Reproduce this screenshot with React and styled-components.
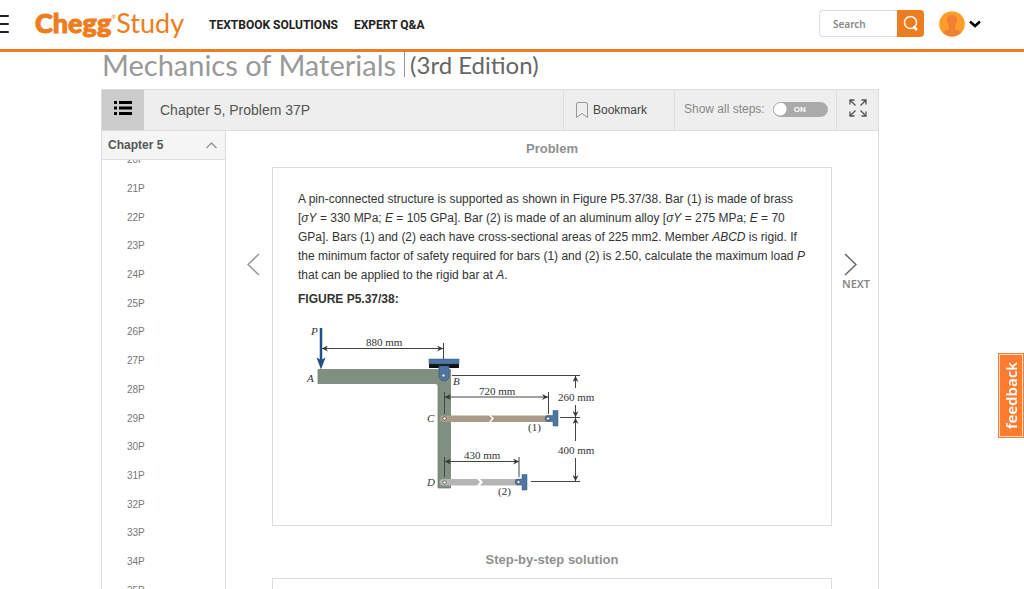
import React from 'react';
import styled, { createGlobalStyle } from 'styled-components';

const GlobalStyle = createGlobalStyle`
  * {
    box-sizing: border-box;
  }

  body {
    margin: 0;
    background: #fff;
    font-family: "Liberation Sans", Arial, sans-serif;
    color: #333;
  }

  button {
    padding: 0;
    border: 0;
    background: none;
    font: inherit;
    color: inherit;
    cursor: pointer;
  }

  ul, h1, h2, p {
    margin: 0;
    padding: 0;
  }
`;

const Page = styled.div`
  display: flex;
  flex-direction: column;
  height: 100vh;
  overflow: hidden;
`;

const Header = styled.header`
  display: flex;
  flex: none;
  align-items: center;
  height: 52px;
  padding: 0 43px 2px 0;
  border-bottom: 3px solid #ec7c20;
  font-family: Lato, sans-serif;
`;

const Burger = styled.button`
  display: flex;
  width: 35px;
`;

const Logo = styled.a`
  display: flex;
  align-items: flex-start;
  width: 174px;
  padding-bottom: 2px;
  color: #ee7d20;
  font-size: 27px;
  line-height: 32px;
  text-decoration: none;
`;

const LogoBold = styled.span`
  font-weight: 900;
  -webkit-text-stroke: 1px #ee7d20;
`;

const LogoMark = styled.span`
  font-size: 6px;
  line-height: 20px;
`;

const Nav = styled.nav`
  display: flex;
  flex: 1;
  gap: 16px;
  padding-top: 3px;
`;

const NavLink = styled.a`
  color: #222;
  font: 700 12px Roboto, sans-serif;
  text-decoration: none;
`;

const Search = styled.form`
  display: flex;
  width: 105px;
  height: 27px;
  margin-right: 15px;
`;

const SearchInput = styled.input`
  flex: 1;
  min-width: 0;
  padding: 0 13px;
  border: 1px solid #ddd;
  border-right: 0;
  border-radius: 4px 0 0 4px;
  font: 600 10px "Noto Sans", sans-serif;

  &::placeholder {
    color: #888;
    opacity: 1;
  }
`;

const SearchButton = styled.button`
  display: flex;
  align-items: center;
  justify-content: center;
  width: 27px;
  border-radius: 0 4px 4px 0;
  background: #ee7d20;
`;

const Account = styled.button`
  display: flex;
  align-items: center;
  gap: 4px;
`;

const Content = styled.main`
  display: flex;
  flex: 1;
  flex-direction: column;
  min-height: 0;
  padding: 0 145px 0 101px;
`;

const Title = styled.h1`
  display: flex;
  flex: none;
  align-items: center;
  height: 37px;
  padding: 0 0 12px 1px;
  color: #999;
  font: 400 29px/25px Lato, sans-serif;
`;

const Edition = styled.span`
  margin-left: 8px;
  padding-left: 5px;
  border-left: 1px solid #999;
  color: #666;
  font-size: 24px;
`;

const Panel = styled.section`
  display: flex;
  flex: 1;
  flex-direction: column;
  min-height: 0;
  border: 1px solid #ddd;
  border-bottom: 0;
`;

const Toolbar = styled.div`
  display: flex;
  flex: none;
  height: 41px;
  border-bottom: 1px solid #ddd;
  background: #eee;
`;

const ListButton = styled.button`
  display: flex;
  align-items: center;
  justify-content: center;
  width: 42px;
  padding-bottom: 4px;
  background: #ccc;
`;

const ProblemName = styled.div`
  flex: 1;
  padding-left: 16px;
  color: #555;
  font-size: 14px;
  line-height: 40px;
`;

const Tool = styled.div`
  display: flex;
  align-items: center;
  padding-left: ${props => props.inset};
  width: ${props => props.width};
  border-left: 1px solid #ddd;
`;

const BookmarkButton = styled.button`
  display: flex;
  align-items: center;
  gap: 5px;
  color: #444;
  font-size: 12px;
`;

const StepsLabel = styled.label`
  display: flex;
  align-items: center;
  gap: 8px;
  padding-bottom: 2px;
  color: #888;
  font-size: 12px;
`;

const Switch = styled.span`
  display: grid;
  align-items: center;
  width: 55px;
  height: 15px;
  color: #fff;
  font-size: 8px;
  font-weight: 700;

  > * {
    grid-area: 1 / 1;
  }

  > span {
    padding-left: 21px;
    z-index: 1;
  }
`;

const SwitchInput = styled.input`
  appearance: none;
  width: 55px;
  height: 15px;
  margin: 0;
  border: 1px solid #aaa;
  border-radius: 8px;
  background: radial-gradient(circle at 6px 6px, #fff 6px, #aaa 7px);
`;

const Columns = styled.div`
  display: flex;
  flex: 1;
  min-height: 0;
`;

const Sidebar = styled.aside`
  display: flex;
  flex-direction: column;
  width: 124px;
  border-right: 1px solid #ddd;
`;

const Chapter = styled.button`
  display: flex;
  flex: none;
  align-items: center;
  justify-content: space-between;
  height: 29px;
  padding: 0 8px 0 6px;
  border-bottom: 1px solid #ddd;
  background: #f5f5f5;
  color: #555;
  font-size: 12px;
  font-weight: 700;
`;

const ListWindow = styled.div`
  display: flex;
  flex: 1;
  flex-direction: column;
  justify-content: center;
  min-height: 0;
  overflow: hidden;
`;

const ProblemList = styled.ul`
  display: grid;
  flex: none;
  grid-auto-rows: 1fr;
  height: 460px;
  padding-top: 1px;
  list-style: none;
`;

const ProblemItem = styled.li`
  display: flex;
  align-items: center;
  padding-left: 25px;

  a {
    color: #777;
    font-size: 10px;
    text-decoration: none;
  }
`;

const Main = styled.div`
  display: grid;
  flex: 1;
  grid-template-columns: 46px 1fr 46px;
  align-content: start;
  min-width: 0;
  overflow: hidden;
`;

const Heading = styled.h2`
  grid-column: 2;
  height: 36px;
  color: #909090;
  font-size: 13px;
  line-height: 35px;
  text-align: center;
`;

const Card = styled.article`
  grid-column: 2;
  min-height: ${props => props.height};
  padding: 22px 25px;
  border: 1px solid #ddd;
  color: #333;
  font-size: 12px;
  line-height: 19px;
  white-space: nowrap;
`;

const FigureTitle = styled.p`
  padding: 5px 0;
  font-size: 12px;
  font-weight: 700;
`;

const Arrow = styled.button`
  display: flex;
  flex-direction: column;
  align-self: start;
  align-items: center;
  gap: 1px;
  padding: ${props => props.inset};
  color: #888;
  font: 600 11px/14px "Noto Sans", sans-serif;

  svg {
    margin-right: ${props => props.shift};
  }
`;

const Gap = styled.div`
  grid-column: 1 / -1;
  height: 16px;
`;

const Feedback = styled.button`
  position: fixed;
  top: 353px;
  right: 0;
  width: 26px;
  height: 85px;
  border: 1px solid #ff7b30;
  background: #ff7b30;
  box-shadow: inset 0 0 0 1px #ffe0cc;
  color: #fff;
  font: 600 15px/18px "Noto Sans", sans-serif;
  writing-mode: vertical-rl;
  transform: rotate(180deg);
`;

const FigureSvg = styled.svg`
  display: block;
  margin-top: 6px;
  font-family: "Liberation Serif", serif;
  font-size: 11px;
  fill: #333;
`;

const problems = Array.from({ length: 16 }, (_, i) => `${i + 20}P`);

const Dim = ({ d }) => (
  <path d={d} stroke="#444" fill="none" markerStart="url(#tip)" markerEnd="url(#tip)" />
);

const Pin = ({ x, y }) => (
  <circle cx={x} cy={y} r="1.6" fill="#fff" stroke="#555" strokeWidth="0.8" />
);

const Figure = () => (
  <FigureSvg width="306" height="178" viewBox="298 320 306 178" role="img" aria-label="Figure P5.37/38">
    <defs>
      <marker id="tip" viewBox="0 0 6 6" refX="6" refY="3" markerWidth="6" markerHeight="6" orient="auto-start-reverse">
        <path d="M0 0 L6 3 L0 6 L2 3 Z" fill="#333" />
      </marker>
    </defs>
    <path d="M318 369.500H450.500V488H438V386Q438 383.500 435 383.500H318Z" fill="#809080" stroke="#6b796b" strokeWidth="0.700" />
    <path d="M429 364H459V368H429Z" fill="#111" />
    <path d="M429 359H459V364H429Z" fill="#4f76a3" stroke="#345577" strokeWidth="0.500" />
    <path d="M439 366H449V376A5 5 0 0 1 439 376Z" fill="#4f76a3" stroke="#345577" strokeWidth="0.700" />
    <Pin x={443.5} y={375.5} />
    <path d="M321 328V360" stroke="#1f5388" strokeWidth="2.500" />
    <path d="M321 369.500L316.500 357.500L321 360L325.500 357.500Z" fill="#1f5388" />
    <path d="M443.500 343V359M444.500 392V414M548.500 392V414M444.500 457V477M519 457V477M452 375.500H580M560 417.500H580M531 481.500H580" stroke="#444" />
    <path d="M443 415.500H489L492 418.500L489 422H443A3 3 0 0 1 443 415.500Z" fill="#a89c88" />
    <path d="M491 415.500H551V422H491L494 418.500Z" fill="#a89c88" />
    <path d="M443 479H477L480 482L477 485.500H443A3 3 0 0 1 443 479Z" fill="#b5b5b5" />
    <path d="M480 479H521V485.500H480L483 482Z" fill="#b5b5b5" />
    <path d="M548 415.500H553V410.500H558V426H553V421.500H548A3 3 0 0 1 548 415.500Z" fill="#4f76a3" stroke="#345577" strokeWidth="0.500" />
    <path d="M518 479H522V474.500H527V490H522V485H518A3 3 0 0 1 518 479Z" fill="#4f76a3" stroke="#345577" strokeWidth="0.500" />
    <Pin x={444.5} y={418.5} />
    <Pin x={548} y={418.5} />
    <Pin x={444.5} y={482.5} />
    <Pin x={518.5} y={482} />
    <Dim d="M322 348.500H443" />
    <Dim d="M445 397H548" />
    <Dim d="M445 461.500H519" />
    <path d="M575.500 388V376" stroke="#444" markerEnd="url(#tip)" />
    <path d="M575.500 405V417" stroke="#444" markerEnd="url(#tip)" />
    <path d="M575.500 441V418" stroke="#444" markerEnd="url(#tip)" />
    <path d="M575.500 458V481" stroke="#444" markerEnd="url(#tip)" />
    <g fontStyle="italic">
      <text x="311" y="335">P</text>
      <text x="307" y="382">A</text>
      <text x="453" y="385">B</text>
      <text x="427" y="422">C</text>
      <text x="427" y="486">D</text>
    </g>
    <text x="366" y="346">880 mm</text>
    <text x="479" y="395">720 mm</text>
    <text x="558" y="401">260 mm</text>
    <text x="528" y="431">(1)</text>
    <text x="558" y="454">400 mm</text>
    <text x="464" y="459">430 mm</text>
    <text x="498" y="495">(2)</text>
  </FigureSvg>
);

const App = () => (
  <Page>
    <GlobalStyle />
    <Header>
      <Burger aria-label="Menu">
        <svg width="10" height="18" fill="none" stroke="#222" strokeWidth="2" strokeLinecap="round">
          <path d="M0 1H8M0 9H8M0 17H8" />
        </svg>
      </Burger>
      <Logo href="#">
        <LogoBold>Chegg</LogoBold>
        <LogoMark>®</LogoMark>
        <span>Study</span>
      </Logo>
      <Nav>
        <NavLink href="#">TEXTBOOK SOLUTIONS</NavLink>
        <NavLink href="#">EXPERT Q&amp;A</NavLink>
      </Nav>
      <Search onSubmit={e => e.preventDefault()}>
        <SearchInput type="search" placeholder="Search" aria-label="Search" />
        <SearchButton aria-label="Submit search">
          <svg width="16" height="17" fill="none" stroke="#fff" strokeWidth="1.500">
            <circle cx="7.500" cy="7.500" r="6" />
            <path d="M10.500 11.500L14 15" strokeWidth="2.500" />
          </svg>
        </SearchButton>
      </Search>
      <Account aria-label="Account">
        <svg width="26" height="26" viewBox="0 0 26 26">
          <circle cx="13" cy="13" r="12.800" fill="#ff9c27" />
          <path d="M13 4C16.500 4 18.500 6 18 10C17.700 13 16.800 14 16 15V18C18 19.500 21 19.500 22 21.500A12.600 12.600 0 0 1 4 21.500C5 19.500 8 19.500 10 18V15C9 14 8.300 13 8 10C7.500 6 9.500 4 13 4Z" fill="#f07f38" />
        </svg>
        <svg width="12" height="8" fill="none" stroke="#000" strokeWidth="2.500">
          <path d="M1 1.500L6 6L11 1.500" />
        </svg>
      </Account>
    </Header>
    <Content>
      <Title>
        Mechanics of Materials
        <Edition>(3rd Edition)</Edition>
      </Title>
      <Panel>
        <Toolbar>
          <ListButton aria-label="Table of contents">
            <svg width="18" height="14" fill="#000">
              <path d="M0 0H3V3H0ZM5 0H18V3H5ZM0 5.500H3V8.500H0ZM5 5.500H18V8.500H5ZM0 11H3V14H0ZM5 11H18V14H5Z" />
            </svg>
          </ListButton>
          <ProblemName>Chapter 5, Problem 37P</ProblemName>
          <Tool width="111px" inset="12px">
            <BookmarkButton>
              <svg width="12" height="17" fill="none" stroke="#999">
                <path d="M0.500 15.500V2Q0.500 0.500 2 0.500H10Q11.500 0.500 11.500 2V15.500L6 11.500Z" />
              </svg>
              Bookmark
            </BookmarkButton>
          </Tool>
          <Tool width="162px" inset="9px">
            <StepsLabel>
              Show all steps:
              <Switch>
                <SwitchInput type="checkbox" role="switch" defaultChecked />
                <span>ON</span>
              </Switch>
            </StepsLabel>
          </Tool>
          <Tool width="42px" inset="12px">
            <button aria-label="Full screen">
              <svg width="18" height="18" fill="none" stroke="#555" strokeWidth="1.300">
                <path d="M1 5.500V1H5.500M1 1L6.500 6.500M12.500 1H17V5.500M17 1L11.500 6.500M1 12.500V17H5.500M1 17L6.500 11.500M12.500 17H17V12.500M17 17L11.500 11.500" />
              </svg>
            </button>
          </Tool>
        </Toolbar>
        <Columns>
          <Sidebar>
            <Chapter>
              Chapter 5
              <svg width="11" height="7" fill="none" stroke="#999" strokeWidth="1.500">
                <path d="M0.500 6L5.500 1L10.500 6" />
              </svg>
            </Chapter>
            <ListWindow>
              <ProblemList>
                {problems.map(name => (
                  <ProblemItem key={name}>
                    <a href="#">{name}</a>
                  </ProblemItem>
                ))}
              </ProblemList>
            </ListWindow>
          </Sidebar>
          <Main>
            <Heading>Problem</Heading>
            <Arrow shift="-8px" inset="86px 0 0" aria-label="Previous" style={{ gridColumn: 1 }}>
              <svg width="13" height="23" fill="none" stroke="#999" strokeWidth="1.500">
                <path d="M12 1L1 11.500L12 22" />
              </svg>
            </Arrow>
            <Card height="359px">
              <p>
                A pin-connected structure is supported as shown in Figure P5.37/38. Bar (1) is made of brass<br />
                [<i>σY</i> = 330 MPa; <i>E</i> = 105 GPa]. Bar (2) is made of an aluminum alloy [<i>σY</i> = 275 MPa; <i>E</i> = 70<br />
                GPa]. Bars (1) and (2) each have cross-sectional areas of 225 mm2. Member <i>ABCD</i> is rigid. If<br />
                the minimum factor of safety required for bars (1) and (2) is 2.50, calculate the maximum load <i>P</i><br />
                that can be applied to the rigid bar at <i>A</i>.
              </p>
              <FigureTitle>FIGURE P5.37/38:</FigureTitle>
              <Figure />
            </Card>
            <Arrow shift="11px" inset="86px 0 0 2px">
              <svg width="13" height="23" fill="none" stroke="#666" strokeWidth="1.500">
                <path d="M1 1L12 11.500L1 22" />
              </svg>
              NEXT
            </Arrow>
            <Gap />
            <Heading>Step-by-step solution</Heading>
            <Card height="60px" />
          </Main>
        </Columns>
      </Panel>
    </Content>
    <Feedback>feedback</Feedback>
  </Page>
);

export default App;
